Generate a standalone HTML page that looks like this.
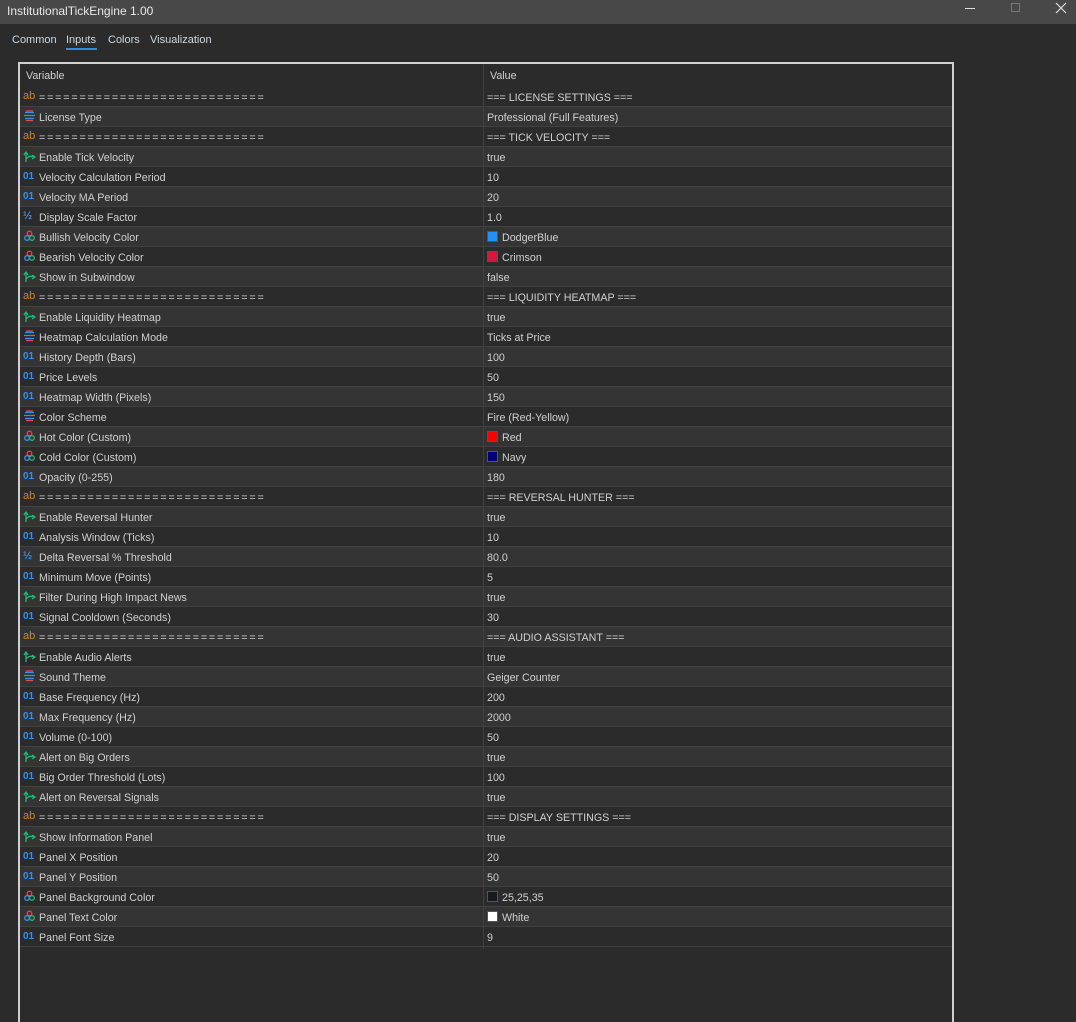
<!DOCTYPE html>
<html><head><meta charset="utf-8"><style>
*{margin:0;padding:0;box-sizing:border-box}
body{width:1076px;height:1016px;background:#2b2b2b;font-family:"Liberation Sans",sans-serif;font-size:10.7px;color:#d0d0d0;position:relative;overflow:hidden}
.title{position:absolute;left:0;top:0;width:1076px;height:24px;background:#484848;color:#e8e8e8;font-size:12px;line-height:22px;padding-left:7px}
.ctl{position:absolute;top:0;height:24px}
.tabs{position:absolute;top:34px;left:12px;font-size:11px;color:#cfd6e0}
.tabs span{position:absolute;white-space:nowrap}
.ul{position:absolute;left:66px;top:48px;width:31px;height:2px;background:#2f8ee0}
.box{position:absolute;left:18px;top:62px;width:936px;height:960px;border:2px solid #cfcfcf;border-bottom:none;background:#2b2b2b}
.hdr{position:absolute;left:0;top:0;width:932px;height:23px}
.hdr span{position:absolute;top:6px}
.row{position:absolute;left:0;width:932px;height:20px;border-bottom:1px solid #404040}
.row.alt{background:#343434}
.row .v{position:absolute;left:19px;top:5px;white-space:nowrap}
.row .val{position:absolute;left:467px;top:5px;white-space:nowrap}
.row .ic{position:absolute;left:3px;top:3px;width:14px;height:13px;font-size:11px;line-height:13px}
.eq{letter-spacing:1.85px}
.div{position:absolute;left:463px;top:0;width:1px;height:885px;background:#404040}
.sw{position:absolute;left:467px;top:4px;width:11px;height:11px}
</style></head><body>
<div class="title">InstitutionalTickEngine 1.00</div>
<div class="ctl" style="left:965px;top:8px;width:10px;height:1px;background:#ddd"></div>
<div class="ctl" style="left:1011px;top:3px;width:9px;height:9px;border:1px solid #777"></div>
<svg class="ctl" style="left:1055px;top:2px" width="12" height="12"><path d="M1 1L11 11M11 1L1 11" stroke="#ddd" stroke-width="1.2"/></svg>
<div class="tabs"><span style="left:0">Common</span><span style="left:54px">Inputs</span><span style="left:96px">Colors</span><span style="left:138px">Visualization</span></div>
<div class="ul"></div>
<div class="box">
<div class="hdr"><span style="left:6px">Variable</span><span style="left:470px">Value</span></div>
<div id="rows"></div>
<div class="div" style="top:0"></div>
</div>
<script>
var R=[
["ab","============================","=== LICENSE SETTINGS ==="],
["en","License Type","Professional (Full Features)"],
["ab","============================","=== TICK VELOCITY ==="],
["b","Enable Tick Velocity","true"],
["i","Velocity Calculation Period","10"],
["i","Velocity MA Period","20"],
["d","Display Scale Factor","1.0"],
["c","Bullish Velocity Color","DodgerBlue","#1e90ff"],
["c","Bearish Velocity Color","Crimson","#dc143c"],
["b","Show in Subwindow","false"],
["ab","============================","=== LIQUIDITY HEATMAP ==="],
["b","Enable Liquidity Heatmap","true"],
["en","Heatmap Calculation Mode","Ticks at Price"],
["i","History Depth (Bars)","100"],
["i","Price Levels","50"],
["i","Heatmap Width (Pixels)","150"],
["en","Color Scheme","Fire (Red-Yellow)"],
["c","Hot Color (Custom)","Red","#ff0000"],
["c","Cold Color (Custom)","Navy","#000080"],
["i","Opacity (0-255)","180"],
["ab","============================","=== REVERSAL HUNTER ==="],
["b","Enable Reversal Hunter","true"],
["i","Analysis Window (Ticks)","10"],
["d","Delta Reversal % Threshold","80.0"],
["i","Minimum Move (Points)","5"],
["b","Filter During High Impact News","true"],
["i","Signal Cooldown (Seconds)","30"],
["ab","============================","=== AUDIO ASSISTANT ==="],
["b","Enable Audio Alerts","true"],
["en","Sound Theme","Geiger Counter"],
["i","Base Frequency (Hz)","200"],
["i","Max Frequency (Hz)","2000"],
["i","Volume (0-100)","50"],
["b","Alert on Big Orders","true"],
["i","Big Order Threshold (Lots)","100"],
["b","Alert on Reversal Signals","true"],
["ab","============================","=== DISPLAY SETTINGS ==="],
["b","Show Information Panel","true"],
["i","Panel X Position","20"],
["i","Panel Y Position","50"],
["c","Panel Background Color","25,25,35","#191923"],
["c","Panel Text Color","White","#ffffff"],
["i","Panel Font Size","9"]];
var I={
ab:'<span style="color:#c08a2e">ab</span>',
i:'<span style="color:#3d8fe6;font-weight:bold;font-size:10px">01</span>',
d:'<span style="color:#3d8fe6;font-weight:bold">½</span>',
en:'<svg width="13" height="12"><path d="M2 2.5H11M1 5.5H12M2 8.5H11" stroke="#3d8fe6" stroke-width="1.2"/><path d="M3 1H10M3 10.5H10" stroke="#e05050" stroke-width="1.2"/></svg>',
b:'<svg width="14" height="13"><path d="M3 12V3M1 5L3 2L5 5M3 9Q6 5 11 7M9 5L12 7L9 9" fill="none" stroke="#25b37a" stroke-width="1.3"/></svg>',
c:'<svg width="13" height="12"><circle cx="6.5" cy="3.5" r="2.3" fill="none" stroke="#e04848" stroke-width="1.3"/><circle cx="4" cy="8" r="2.3" fill="none" stroke="#3d8fe6" stroke-width="1.3"/><circle cx="9" cy="8" r="2.3" fill="none" stroke="#25b37a" stroke-width="1.3"/></svg>'};
var h='';
R.forEach(function(r,k){
 var top=23+k*20;
 var sw=r[3]?'<div class="sw" style="background:'+r[3]+';border:1px solid #555"></div>':'';
 var cls=r[0]=='ab'?'v eq':'v';
 h+='<div class="row'+(k%2?' alt':'')+'" style="top:'+top+'px"><div class="ic">'+I[r[0]]+'</div><span class="'+cls+'">'+r[1]+'</span>'+sw+'<span class="val" style="left:'+(r[3]?482:467)+'px">'+r[2]+'</span></div>';
});
document.getElementById('rows').innerHTML=h;
</script>
</body></html>
